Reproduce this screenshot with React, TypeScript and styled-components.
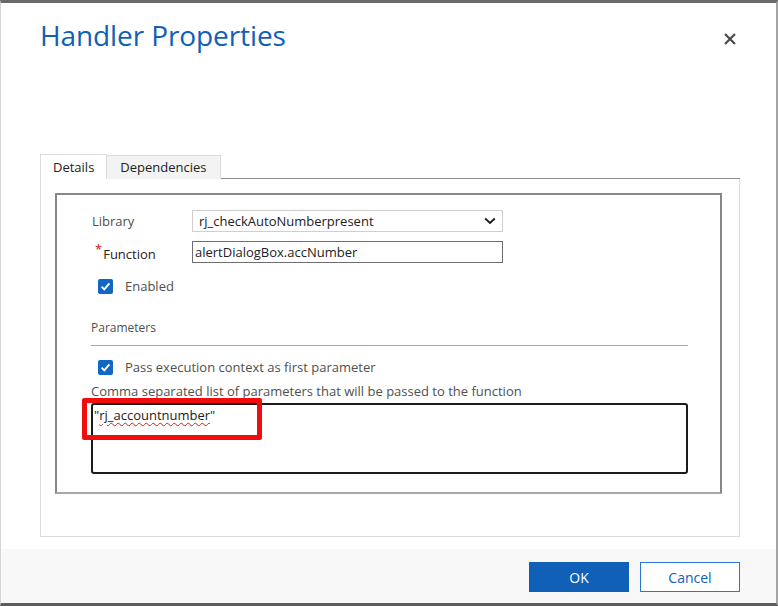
import React from "react";
import styled, {createGlobalStyle} from "styled-components";

const GlobalStyle = createGlobalStyle`
  html, body {
    margin: 0;
    padding: 0;
    background: #ffffff;
  }
  body {
    font-family: "Open Sans", "Noto Sans", "Liberation Sans", sans-serif;
    color: #333;
  }
`;

const Frame = styled.div`
  width: 778px;
  height: 606px;
  box-sizing: border-box;
  background: #fff;
  border-top: 3px solid #6a6a6a;
  border-left: 1px solid #d4d4d4;
  border-right: 2px solid #a4a4a4;
  border-bottom: 3px solid #5c5c5c;
  display: flex;
  flex-direction: column;
`;

const Body = styled.div`
  flex: 1;
  display: flex;
  flex-direction: column;
  padding: 0 36px 12px 39px;
`;

const Header = styled.div`
  display: flex;
  justify-content: space-between;
  align-items: center;
  height: 64px;
`;

const Title = styled.h1`
  margin: 0;
  font-size: 28px;
  font-weight: 400;
  color: #1160b7;
  letter-spacing: -0.1px;
`;

const CloseBtn = styled.button`
  border: none;
  background: transparent;
  padding: 0;
  width: 24px;
  height: 24px;
  margin-right: -2px;
  margin-top: 7px;
  display: flex;
  align-items: center;
  justify-content: center;
  cursor: pointer;
`;

const TabBar = styled.div`
  display: flex;
  align-items: flex-end;
  margin-top: 87px;
  height: 25px;
`;

const Tab = styled.div<{ $active?: boolean }>`
  box-sizing: border-box;
  height: ${p => p.$active ? '25px' : '24px'};
  padding: 0 ${p => p.$active ? '12px' : '13px'};
  display: flex;
  align-items: center;
  font-size: 13px;
  color: #222;
  background: ${p => p.$active ? '#fff' : '#f3f3f3'};
  border: 1px solid #dcdcdc;
  border-bottom: ${p => p.$active ? 'none' : '1px solid #f3f3f3'};
  border-left: ${p => p.$active ? '1px solid #dcdcdc' : 'none'};
`;

const TabFiller = styled.div`
  flex: 1;
  border-bottom: 1px solid #8c8c8c;
`;

const Panel = styled.div`
  flex: 1;
  border: 1px solid #dcdcdc;
  border-top: none;
  padding: 14px 17px 42px 14px;
`;

const Group = styled.div`
  border: 2px solid #878787;
  border-bottom-color: #a8a8a8;
  padding: 15px 32px 18px 34px;
  display: flex;
  flex-direction: column;
`;

const FieldRow = styled.div<{ $gap?: number }>`
  display: grid;
  grid-template-columns: 101px 311px;
  align-items: center;
  height: 22px;
  margin-top: ${p => p.$gap ?? 0}px;
`;

const Label = styled.label`
  font-size: 13px;
  color: #505050;
  padding-left: 1px;
`;

const RequiredLabel = styled(Label)`
  padding-left: 4px;
  padding-top: 5px;
  color: #222;
`;

const Star = styled.span`
  color: #d40f0f;
  font-size: 13px;
  position: relative;
  top: -5px;
  margin-right: 1px;
`;

const Select = styled.div`
  box-sizing: border-box;
  height: 22px;
  border: 1px solid #cfcfcf;
  display: flex;
  align-items: center;
  justify-content: space-between;
  padding: 0 6px 0 6px;
  font-size: 13px;
  color: #222;
`;

const Input = styled.div`
  box-sizing: border-box;
  height: 22px;
  border: 1px solid #6e6e6e;
  display: flex;
  align-items: center;
  padding: 0 2px;
  font-size: 13px;
  color: #222;
`;

const CheckRow = styled.div<{ $gap: number }>`
  display: flex;
  align-items: center;
  height: 20px;
  margin-top: ${p => p.$gap}px;
  padding-left: 7px;
  gap: 12px;
  font-size: 13px;
  color: #505050;
`;

const Box = styled.span`
  width: 15px;
  height: 15px;
  border-radius: 2px;
  background: #1167c4;
  display: flex;
  align-items: center;
  justify-content: center;
`;

const SectionTitle = styled.div`
  margin-top: 22px;
  font-size: 12px;
  color: #505050;
  line-height: 20px;
  padding-bottom: 7px;
  border-bottom: 1px solid #a6a6a6;
`;

const Hint = styled.div`
  margin-top: 5px;
  font-size: 13px;
  line-height: 18px;
  color: #505050;
`;

const TextBoxWrap = styled.div`
  position: relative;
  margin-top: 3px;
`;

const TextBox = styled.div`
  box-sizing: border-box;
  height: 71px;
  border: 2px solid #1b1b1b;
  border-radius: 3px;
  padding: 1px 0 0 1px;
  font-size: 13px;
  color: #222;
  line-height: 18px;
`;

const Misspelled = styled.span`
  text-decoration: underline wavy #d21e1e;
  text-decoration-thickness: 1px;
  text-underline-offset: 2px;
`;

const Highlight = styled.div`
  position: absolute;
  left: -9px;
  top: -5px;
  width: 180px;
  height: 42px;
  box-sizing: border-box;
  border: 5px solid #f10d0d;
  border-radius: 2px;
  pointer-events: none;
`;

const Footer = styled.div`
  height: 54px;
  background: #f8f8f8;
  display: flex;
  align-items: flex-start;
  justify-content: flex-end;
  gap: 11px;
  padding: 13px 36px 0 0;
  box-sizing: border-box;
`;

const Button = styled.button<{ $primary?: boolean }>`
  width: 100px;
  height: 30px;
  box-sizing: border-box;
  font-family: inherit;
  font-size: 14px;
  cursor: pointer;
  border: 1px solid ${p => p.$primary ? '#1160b7' : '#2878d0'};
  background: ${p => p.$primary ? '#1160b7' : '#fff'};
  color: ${p => p.$primary ? '#fff' : '#1160b7'};
`;

const Check = () => (
    <Box>
        <svg width="11" height="11" viewBox="0 0 11 11">
            <path d="M1.6 5.6 L4.3 8.3 L9.4 2.4" fill="none" stroke="#fff" strokeWidth="1.9"/>
        </svg>
    </Box>
);

export default function App() {
    return (
        <>
            <GlobalStyle/>
            <Frame>
                <Body>
                    <Header>
                        <Title>Handler Properties</Title>
                        <CloseBtn aria-label="Close">
                            <svg width="12" height="12" viewBox="0 0 12 12">
                                <path d="M1 1 L11 11 M11 1 L1 11" stroke="#4a4a4a" strokeWidth="2.2"/>
                            </svg>
                        </CloseBtn>
                    </Header>

                    <TabBar>
                        <Tab $active>Details</Tab>
                        <Tab>Dependencies</Tab>
                        <TabFiller/>
                    </TabBar>

                    <Panel>
                        <Group>
                            <FieldRow $gap={0}>
                                <Label>Library</Label>
                                <Select>
                                    <span>rj_checkAutoNumberpresent</span>
                                    <svg width="12" height="8" viewBox="0 0 12 8">
                                        <path d="M1.2 1.5 L6 6 L10.8 1.5" fill="none" stroke="#1b1b1b" strokeWidth="1.8"/>
                                    </svg>
                                </Select>
                            </FieldRow>
                            <FieldRow $gap={8}>
                                <RequiredLabel><Star>*</Star>Function</RequiredLabel>
                                <Input>alertDialogBox.accNumber</Input>
                            </FieldRow>
                            <CheckRow $gap={14}>
                                <Check/>
                                <span>Enabled</span>
                            </CheckRow>

                            <SectionTitle>Parameters</SectionTitle>
                            <CheckRow $gap={11}>
                                <Check/>
                                <span>Pass execution context as first parameter</span>
                            </CheckRow>
                            <Hint>Comma separated list of parameters that will be passed to the function</Hint>
                            <TextBoxWrap>
                                <TextBox>"<Misspelled>rj_accountnumber</Misspelled>"</TextBox>
                                <Highlight/>
                            </TextBoxWrap>
                        </Group>
                    </Panel>
                </Body>
                <Footer>
                    <Button $primary>OK</Button>
                    <Button>Cancel</Button>
                </Footer>
            </Frame>
        </>
    );
}
